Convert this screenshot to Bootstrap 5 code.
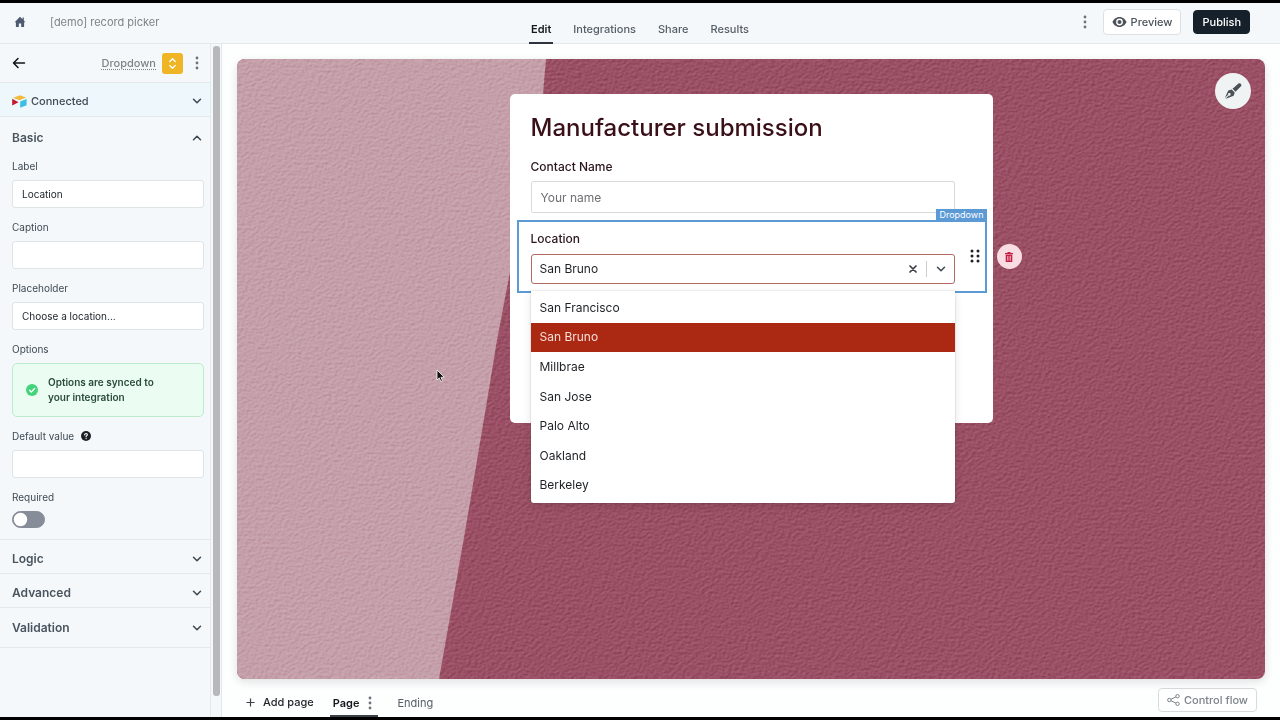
<!DOCTYPE html>
<html lang="en">
<head>
<meta charset="utf-8">
<meta name="viewport" content="width=device-width, initial-scale=1">
<title>[demo] record picker</title>
<link href="https://cdn.jsdelivr.net/npm/bootstrap@5.3.0/dist/css/bootstrap.min.css" rel="stylesheet">
<style>
  body { font-family: Inter, "Liberation Sans", sans-serif; font-size: 11px; line-height: 16px; color: #3f4a54; background: #fdfefe; border-top: 3px solid #000; border-bottom: 3px solid #000; }
  button { font: inherit; color: inherit; }
  svg { display: block; flex: none; }
  .plain-btn { background: none; border: 0; padding: 0; }
  .topbar { height: 41px; background: #f4f8fa; border-bottom: 1px solid #e3e8eb; padding: 0 14px 2px; }
  .topbar .doc-name { color: #7c8388; margin-left: 24px; }
  .top-actions { padding-right: 16px; }
  .top-tabs { gap: 18px; margin-bottom: -3px; }
  .top-tabs .nav-link { padding: 0 2px 5px; color: #565e66; font-weight: 500; border-bottom: 2px solid transparent; }
  .top-tabs .nav-link.active { color: #15191e; font-weight: 600; border-color: #2d343b; }
  .btn-edit { font-size: 11px; line-height: 16px; font-weight: 500; padding: 3px 8px; border-radius: 4px; }
  .btn-preview { background: #fff; border-color: #dde1e4; color: #4b5259; padding-top: 4px; padding-bottom: 4px; }
  .btn-publish, .btn-publish:hover { background: #16202b; border-color: #16202b; color: #fff; }

  .sidebar { width: 222px; background: #f4f8fa; border-right: 1px solid #e3e8eb; }
  .side-body { border-right: 1px solid #e3e8eb; min-width: 0; }
  .side-head { height: 39px; padding: 0 7px 0 12px; border-bottom: 1px solid #e3e8eb; }
  .side-head a { color: #7c8388; font-weight: 500; text-decoration: underline dotted; text-underline-offset: 2px; margin-right: 6px; }
  .type-chip { width: 21px; height: 21px; background: #efb525; border-radius: 3px; color: #fff; }
  .side-row { height: 34px; padding: 0 8px 0 12px; border-bottom: 1px solid #e3e8eb; }
  .side-row.linked { background: #eef8fc; font-weight: 500; padding-top: 3px; }
  .side-row.last-row { height: 40px; }
  .side-title { font-size: 12px; font-weight: 600; color: #4a545e; }
  .fields { padding: 3px 6px 11px 12px; border-bottom: 1px solid #e3e8eb; gap: 11px; }
  .fields .form-label { margin-bottom: 6px; display: flex; gap: 7px; align-items: center; font-size: 10px; line-height: 16px; }
  .fields .form-control { height: 28px; font-size: 10px; padding: 0 9px; border-color: #dfe4e6; border-radius: 3px; color: #22282e; }
  .synced { background: #ebfdf2; border: 1px solid #bdebcd; border-radius: 5px; padding: 11px 13px; gap: 10px; font-weight: 600; font-size: 10px; line-height: 15px; color: #2a4a3b; height: 54px; }
  .form-check-input.req { width: 33px; height: 17px; margin: 0; float: none; background-color: #868c98; border-color: #868c98; --bs-form-switch-bg: url("data:image/svg+xml,%3csvg xmlns='http://www.w3.org/2000/svg' viewBox='-4 -4 8 8'%3e%3ccircle r='3.6' fill='%23fff'/%3e%3c/svg%3e"); }
  .side-scroll { width: 10px; padding: 2px 1px 21px 2px; }
  .side-scroll div { background: #b7b8b9; border-radius: 3px; }

  .stage { padding: 15px 15px 0; }
  .canvas { border-radius: 8px; background: #9b5065; overflow: hidden; padding: 35px 0; box-shadow: 0 3px 8px rgba(40, 50, 60, .14); }
  .backdrop { inset: 0; width: 100%; height: 100%; }
  .grain { mix-blend-mode: soft-light; }
  .form-sheet { width: 483px; background: #fff; border-radius: 5px; padding: 20px 6px 130px 7px; }
  .form-sheet h1 { font-size: 24px; line-height: 28px; font-weight: 500; color: #3a1018; margin: 0 0 15px 14px; }
  .block { border: 2px solid transparent; padding: 0 30px 0 12px; }
  .block .form-label { font-size: 12px; font-weight: 500; color: #2b151a; line-height: 16px; margin-bottom: 6px; }
  .block .form-control { height: 32px; font-size: 12px; padding: 0 9px; border-color: #d9dadc; border-radius: 2px; }
  .block .form-control::placeholder { color: #6d6f73; }
  .block.selected { border-color: #5c9ad6; padding-top: 9px; padding-bottom: 7px; margin-top: 5px; }
  .block.selected .form-label { margin-bottom: 7px; }
  .picker { height: 30px; border: 1px solid #b06a62; border-radius: 3px; padding: 0 8px; background: #fff; }
  .picker select { appearance: none; border: 0; background: none; font-size: 12px; color: #1d2024; outline: 0; padding: 0; }
  .picker .bar { width: 1px; height: 16px; background: #ccc; margin: 0 9px 0 8px; }
  .option-list { left: 12px; right: 30px; top: 69px; height: 212px; padding: 2px 0 3px; background: #fff; border-radius: 0 0 3px 3px; box-shadow: 0 0 0 1px rgba(0,0,0,.05), 0 3px 8px rgba(0,0,0,.12); z-index: 2; }
  .option-list button { flex: 1; text-align: left; padding: 0 9px; font-size: 12px; color: #1d2024; }
  .option-list button.on { background: #ab2912; color: #f8dfda; }
  .type-tag { right: -2px; top: -13px; height: 12px; line-height: 12px; background: #5c9ad6; color: #fff; font-size: 9px; padding: 0 3px; font-weight: 400; }
  .grip { right: 5px; top: 27px; }
  .trash { right: -37px; top: 22px; width: 25px; height: 25px; border-radius: 50%; background: #f9dde2; color: #c61f45; }
  .theme { right: 14px; top: 14px; width: 36px; height: 36px; border-radius: 50%; background: #f0f3f4; color: #4a5257; }
  .pointer { left: 199px; top: 310px; }
  .pagebar { height: 38px; padding: 0 8px 0 9px; }
  .pagebar .page-tab { color: #565e66; border-bottom: 2px solid transparent; padding: 11px 3px 0; height: 38px; gap: 6px; }
  .pagebar .page-tab.active { color: #15191e; font-weight: 600; border-color: #3a4147; }
  .btn-flow { background: #fff; border-color: #d7dbde; color: #7c838a; }
</style>
</head>
<body class="d-flex flex-column min-vh-100">
<svg width="0" height="0" class="position-absolute" aria-hidden="true">
  <symbol id="chev" viewBox="0 0 10 10"><path d="M1.500 3.200 5 6.800l3.500-3.600" fill="none" stroke="#3f4a54" stroke-width="1.500" stroke-linecap="round" stroke-linejoin="round"/></symbol>
  <symbol id="dots" viewBox="0 0 4 14"><g fill="#6b7279"><circle cx="2" cy="2" r="1.400"/><circle cx="2" cy="7" r="1.400"/><circle cx="2" cy="12" r="1.400"/></g></symbol>
</svg>

<header class="topbar d-flex align-items-center">
  <div class="d-flex align-items-center flex-fill w-25">
    <a href="#" aria-label="Home"><svg width="12" height="12" viewBox="0 0 12 12"><path d="M6 .8.6 6.200h1.300V11h2.900V7.500h2.400V11h2.900V6.200h1.300L9.800 4.500V1.600H8.500v1.600z" fill="#4d5a70"/></svg></a>
    <span class="doc-name">[demo] record picker</span>
  </div>
  <nav class="nav top-tabs align-self-end flex-nowrap">
    <a class="nav-link active" href="#">Edit</a>
    <a class="nav-link" href="#">Integrations</a>
    <a class="nav-link" href="#">Share</a>
    <a class="nav-link" href="#">Results</a>
  </nav>
  <div class="top-actions d-flex align-items-center justify-content-end flex-fill w-25">
    <button class="plain-btn me-3" aria-label="More"><svg width="4" height="14"><use href="#dots"/></svg></button>
    <button class="btn btn-edit btn-preview d-flex align-items-center gap-1 me-2"><svg width="15" height="12" viewBox="0 0 15 12"><path fill="#4b5259" fill-rule="evenodd" d="M7.500 1C4 1 1.500 3.500.5 6c1 2.500 3.500 5 7 5s6-2.500 7-5c-1-2.500-3.500-5-7-5zm0 1.600a3.400 3.400 0 1 1 0 6.800 3.400 3.400 0 0 1 0-6.800z"/><circle cx="7.500" cy="6" r="2" fill="#4b5259"/></svg>Preview</button>
    <button class="btn btn-edit btn-publish ms-1">Publish</button>
  </div>
</header>

<div class="d-flex flex-fill">
  <aside class="sidebar d-flex flex-shrink-0">
    <div class="side-body flex-fill">
      <div class="side-head d-flex align-items-center">
        <button class="plain-btn" aria-label="Back"><svg width="14" height="12" viewBox="0 0 14 12"><path d="M6 1.500 1.500 6 6 10.500M1.500 6h11" fill="none" stroke="#101418" stroke-width="1.500" stroke-linecap="round" stroke-linejoin="round"/></svg></button>
        <a href="#" class="ms-auto">Dropdown</a>
        <span class="type-chip d-flex align-items-center justify-content-center me-2"><svg width="9" height="13" viewBox="0 0 9 13"><path d="M1.800 4.500 4.500 1.800l2.700 2.700M1.800 8.500l2.700 2.700 2.700-2.700" fill="none" stroke="#fff" stroke-width="1.300" stroke-linecap="round" stroke-linejoin="round"/></svg></span>
        <button class="plain-btn px-1" aria-label="Field menu"><svg width="4" height="14"><use href="#dots"/></svg></button>
      </div>
      <div class="side-row linked d-flex align-items-center">
        <svg width="15" height="13" viewBox="0 0 15 13"><path d="M1.200 2.700 7 .5q.7-.2 1.400 0l5.800 2.100-6 2.300q-.8.300-1.500 0z" fill="#f0bd3a"/><path d="M.2 3.800v6.700l6.300-3.200z" fill="#c5192f"/><path d="M8.200 6.400 14.600 4v6.200l-6.400 2.500z" fill="#3cbfe3"/></svg>
        <span class="ms-1">Connected</span>
        <button class="plain-btn ms-auto" aria-label="Expand connection"><svg width="10" height="10"><use href="#chev"/></svg></button>
      </div>
      <div class="d-flex align-items-center side-row border-0 pt-2">
        <span class="side-title">Basic</span>
        <button class="plain-btn ms-auto" aria-label="Collapse Basic"><svg width="10" height="10" viewBox="0 0 10 10"><path d="M1.500 6.800 5 3.200l3.500 3.600" fill="none" stroke="#3f4a54" stroke-width="1.500" stroke-linecap="round" stroke-linejoin="round"/></svg></button>
      </div>
      <div class="fields d-flex flex-column">
        <div class="pt-1"><label class="form-label" for="f-label">Label</label><input class="form-control" id="f-label" value="Location"></div>
        <div><label class="form-label" for="f-caption">Caption</label><input class="form-control" id="f-caption"></div>
        <div><label class="form-label" for="f-ph">Placeholder</label><input class="form-control" id="f-ph" value="Choose a location..."></div>
        <div><div class="form-label">Options</div>
          <div class="synced d-flex align-items-center"><svg width="12" height="12" viewBox="0 0 12 12"><circle cx="6" cy="6" r="6" fill="#44d37a"/><path d="m3.500 6.200 1.800 1.800 3.300-3.500" fill="none" stroke="#fff" stroke-width="1.300" stroke-linecap="round"/></svg><span>Options are synced to<br>your integration</span></div></div>
        <div><label class="form-label" for="f-def">Default value <svg width="10" height="10" viewBox="0 0 10 10"><circle cx="5" cy="5" r="5" fill="#1b2026"/><path d="M3.600 3.900q.1-1.400 1.500-1.400 1.300.1 1.300 1.200 0 .6-.7 1-.6.300-.6 1M5.100 7.200v.4" fill="none" stroke="#fff" stroke-width="1.100" stroke-linecap="round"/></svg></label><input class="form-control" id="f-def"></div>
        <div class="form-switch p-0"><label class="form-label" for="f-req">Required</label><input class="form-check-input req d-block" type="checkbox" role="switch" id="f-req"></div>
      </div>
      <div class="side-row side-title d-flex align-items-center pt-1"><span>Logic</span><button class="plain-btn ms-auto" aria-label="Expand Logic"><svg width="10" height="10"><use href="#chev"/></svg></button></div>
      <div class="side-row side-title d-flex align-items-center pt-1"><span>Advanced</span><button class="plain-btn ms-auto" aria-label="Expand Advanced"><svg width="10" height="10"><use href="#chev"/></svg></button></div>
      <div class="side-row last-row side-title d-flex align-items-center"><span>Validation</span><button class="plain-btn ms-auto" aria-label="Expand Validation"><svg width="10" height="10"><use href="#chev"/></svg></button></div>
    </div>
    <div class="side-scroll d-flex"><div class="flex-fill"></div></div>
  </aside>

  <main class="stage d-flex flex-column flex-fill">
    <section class="canvas flex-fill position-relative">
      <svg class="backdrop position-absolute" viewBox="0 0 1028 620" preserveAspectRatio="none"><path d="M0 0H309L306 35 296 110 273 213 260 281 247 360 230 461 219 524 202 620H0z" fill="#c5a0ab"/></svg>
      <svg class="backdrop grain position-absolute">
        <filter id="paper" x="0" y="0" width="100%" height="100%" color-interpolation-filters="sRGB">
          <feTurbulence type="fractalNoise" baseFrequency=".3 .38" numOctaves="3" seed="8"/>
          <feDiffuseLighting surfaceScale="1" diffuseConstant="1" lighting-color="#fff"><feDistantLight azimuth="235" elevation="30"/></feDiffuseLighting>
        </filter>
        <rect width="100%" height="100%" filter="url(#paper)" opacity=".4"/>
      </svg>
      <form class="form-sheet mx-auto position-relative">
        <h1>Manufacturer submission</h1>
        <div class="block">
          <label class="form-label d-block" for="contact">Contact Name</label>
          <input class="form-control" id="contact" placeholder="Your name">
        </div>
        <div class="block selected position-relative">
          <label class="form-label d-block" for="location">Location</label>
          <div class="picker d-flex align-items-center">
            <select id="location" class="flex-fill"><option>San Francisco</option><option selected>San Bruno</option><option>Millbrae</option><option>San Jose</option><option>Palo Alto</option><option>Oakland</option><option>Berkeley</option></select>
            <button type="button" class="plain-btn" aria-label="Clear"><svg width="10" height="10" viewBox="0 0 10 10"><path d="m2 2 6 6M8 2 2 8" stroke="#3b3f43" stroke-width="1.700" stroke-linecap="round"/></svg></button>
            <span class="bar"></span>
            <svg width="10" height="10"><use href="#chev"/></svg>
          </div>
          <div class="option-list position-absolute d-flex flex-column">
            <button type="button" class="plain-btn">San Francisco</button>
            <button type="button" class="plain-btn on">San Bruno</button>
            <button type="button" class="plain-btn">Millbrae</button>
            <button type="button" class="plain-btn">San Jose</button>
            <button type="button" class="plain-btn">Palo Alto</button>
            <button type="button" class="plain-btn">Oakland</button>
            <button type="button" class="plain-btn">Berkeley</button>
          </div>
          <span class="type-tag position-absolute">Dropdown</span>
          <svg class="grip position-absolute" width="10" height="14" viewBox="0 0 10 14"><g fill="#1d2024"><circle cx="2" cy="2" r="1.500"/><circle cx="8" cy="2" r="1.500"/><circle cx="2" cy="7" r="1.500"/><circle cx="8" cy="7" r="1.500"/><circle cx="2" cy="12" r="1.500"/><circle cx="8" cy="12" r="1.500"/></g></svg>
          <button type="button" class="plain-btn trash position-absolute d-flex align-items-center justify-content-center" aria-label="Delete"><svg width="8" height="10" viewBox="0 0 8 10"><path fill="currentColor" fill-rule="evenodd" d="M2.500 0h3v1H8v1.300H0V1h2.500zM.7 2.800h6.600V10H.7zM2.400 4v4.800h.9V4zm2.300 0v4.800h.9V4z"/></svg></button>
        </div>
      </form>
      <button class="plain-btn theme position-absolute d-flex align-items-center justify-content-center" aria-label="Theme"><svg width="18" height="18" viewBox="0 0 18 18"><path d="M14.800 1.300a1.900 1.900 0 0 1 2.200 2.900L11.500 9.700 8.500 6.700z" fill="currentColor"/><path fill-rule="evenodd" d="m7.700 7.500 3 3-1 3.300L1.300 17l3.500-3.500a1.300 1.300 0 1 0-.7-.7L.9 16.100 4.200 8.500z" fill="currentColor"/></svg></button>
      <svg class="pointer position-absolute" width="10" height="14" viewBox="0 0 10 14"><path d="M1 1v10l2.300-2.100 1.500 3.600 1.700-.7L5 8.300h3.300z" fill="#111" stroke="#fff" stroke-width=".8"/></svg>
    </section>
    <nav class="pagebar d-flex align-items-center">
      <button class="plain-btn d-flex align-items-center gap-2 fw-medium text-dark me-3 pt-2"><svg width="9" height="9" viewBox="0 0 9 9"><path d="M4.500.5v8M.5 4.500h8" stroke="#3b4249" stroke-width="1.200"/></svg>Add page</button>
      <a class="page-tab active d-flex align-items-center text-decoration-none me-3" href="#">Page <svg width="10" height="14"><use href="#dots"/></svg></a>
      <a class="page-tab d-flex align-items-center text-decoration-none" href="#">Ending</a>
      <button class="btn btn-edit btn-flow d-flex align-items-center gap-1 ms-auto mt-1"><svg width="13" height="12" viewBox="0 0 13 12"><g fill="none" stroke="currentColor" stroke-width="1"><circle cx="2.300" cy="6" r="1.700"/><circle cx="10.500" cy="2.200" r="1.700"/><circle cx="10.500" cy="9.800" r="1.700"/><path d="m3.900 5.300 5-2.400M3.900 6.700l5 2.400"/></g></svg>Control flow</button>
    </nav>
  </main>
</div>
<script src="https://cdn.jsdelivr.net/npm/bootstrap@5.3.0/dist/js/bootstrap.bundle.min.js"></script>
</body>
</html>
